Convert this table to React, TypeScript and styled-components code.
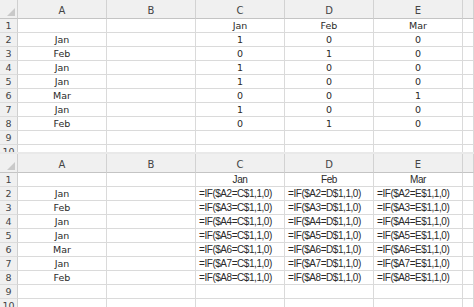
import * as React from "react";
import styled, { createGlobalStyle } from "styled-components";

const GlobalStyle = createGlobalStyle`
  html, body {
    margin: 0;
    padding: 0;
    background: #e9e9e9;
  }
  body {
    font-family: "DejaVu Sans", "Liberation Sans", sans-serif;
    color: #333;
  }
`;

const Page = styled.div`
  width: 474px;
  height: 307px;
  display: flex;
  flex-direction: column;
  gap: 2px;
  overflow: hidden;
  background: #e9e9e9;
`;

const Sheet = styled.div<{ $height: number }>`
  height: ${(p) => p.$height}px;
  overflow: hidden;
  background: #fff;
  flex: none;
`;

const Row = styled.div<{ $header?: boolean }>`
  display: grid;
  grid-template-columns: 18px repeat(5, 89px) 1fr;
  height: ${(p) => (p.$header ? 19 : 14)}px;
  background: ${(p) => (p.$header ? "#f0f0f0" : "#fff")};
`;

const Corner = styled.div`
  position: relative;
  border-right: 1px solid #cfcfcf;
  border-bottom: 1px solid #c4c4c4;
  &::after {
    content: "";
    position: absolute;
    right: 2px;
    bottom: 2px;
    width: 0;
    height: 0;
    border-left: 8px solid transparent;
    border-bottom: 8px solid #c9c9c9;
  }
`;

const ColHead = styled.div`
  display: flex;
  align-items: center;
  justify-content: center;
  padding-top: 2px;
  font-size: 10px;
  color: #444;
  border-right: 1px solid #d2d2d2;
  border-bottom: 1px solid #c4c4c4;
  box-sizing: border-box;
`;

const RowHead = styled.div`
  display: flex;
  align-items: center;
  justify-content: center;
  font-size: 9.5px;
  color: #444;
  background: #f0f0f0;
  border-right: 1px solid #cfcfcf;
  border-bottom: 1px solid #dcdcdc;
  box-sizing: border-box;
`;

const Cell = styled.div<{ $align?: "left" | "center"; $formula?: boolean }>`
  display: flex;
  align-items: center;
  justify-content: ${(p) => (p.$align === "left" ? "flex-start" : "center")};
  padding-left: ${(p) => (p.$align === "left" ? "3px" : "0")};
  font-family: ${(p) =>
    p.$formula ? `"Liberation Sans", Arial, sans-serif` : `"DejaVu Sans", sans-serif`};
  font-size: ${(p) => (p.$formula ? "10px" : "9.5px")};
  letter-spacing: ${(p) => (p.$formula ? "-0.45px" : "0")};
  color: #2a2a2a;
  white-space: nowrap;
  overflow: hidden;
  border-right: 1px solid #dadada;
  border-bottom: 1px solid #dadada;
  box-sizing: border-box;
`;

type CellData = { text: string; align?: "left" | "center"; formula?: boolean };

const COLS = ["A", "B", "C", "D", "E", ""];

const labels = ["", "Jan", "Feb", "Jan", "Jan", "Mar", "Jan", "Feb"];
const values: number[][] = [
  [1, 0, 0],
  [0, 1, 0],
  [1, 0, 0],
  [1, 0, 0],
  [0, 0, 1],
  [1, 0, 0],
  [0, 1, 0],
];

const empty = (): CellData => ({ text: "" });

const valueRows: CellData[][] = Array.from({ length: 10 }, (_, i) => {
  const r = i + 1;
  if (r === 1) {
    return [empty(), empty(), { text: "Jan" }, { text: "Feb" }, { text: "Mar" }, empty()];
  }
  if (r > 8) return COLS.map(empty);
  return [
    { text: labels[r - 1] },
    empty(),
    ...values[r - 2].map((v) => ({ text: String(v) })),
    empty(),
  ];
});

const formulaRows: CellData[][] = Array.from({ length: 10 }, (_, i) => {
  const r = i + 1;
  if (r === 1) {
    return [
      empty(),
      empty(),
      { text: "Jan", formula: true },
      { text: "Feb", formula: true },
      { text: "Mar", formula: true },
      empty(),
    ];
  }
  if (r > 8) return COLS.map(empty);
  return [
    { text: labels[r - 1] },
    empty(),
    ...["C", "D", "E"].map((c) => ({
      text: `=IF($A${r}=${c}$1,1,0)`,
      align: "left" as const,
      formula: true,
    })),
    empty(),
  ];
});

const Grid = ({ rows, height }: { rows: CellData[][]; height: number }) => (
  <Sheet $height={height}>
    <Row $header>
      <Corner />
      {COLS.map((c, i) => (
        <ColHead key={i}>{c}</ColHead>
      ))}
    </Row>
    {rows.map((cells, i) => (
      <Row key={i}>
        <RowHead>{i + 1}</RowHead>
        {cells.map((cell, j) => (
          <Cell key={j} $align={cell.align} $formula={cell.formula}>
            {cell.text}
          </Cell>
        ))}
      </Row>
    ))}
  </Sheet>
);

const App = () => (
  <>
    <GlobalStyle />
    <Page>
      <Grid rows={valueRows} height={152} />
      <Grid rows={formulaRows} height={153} />
    </Page>
  </>
);

export default App;
